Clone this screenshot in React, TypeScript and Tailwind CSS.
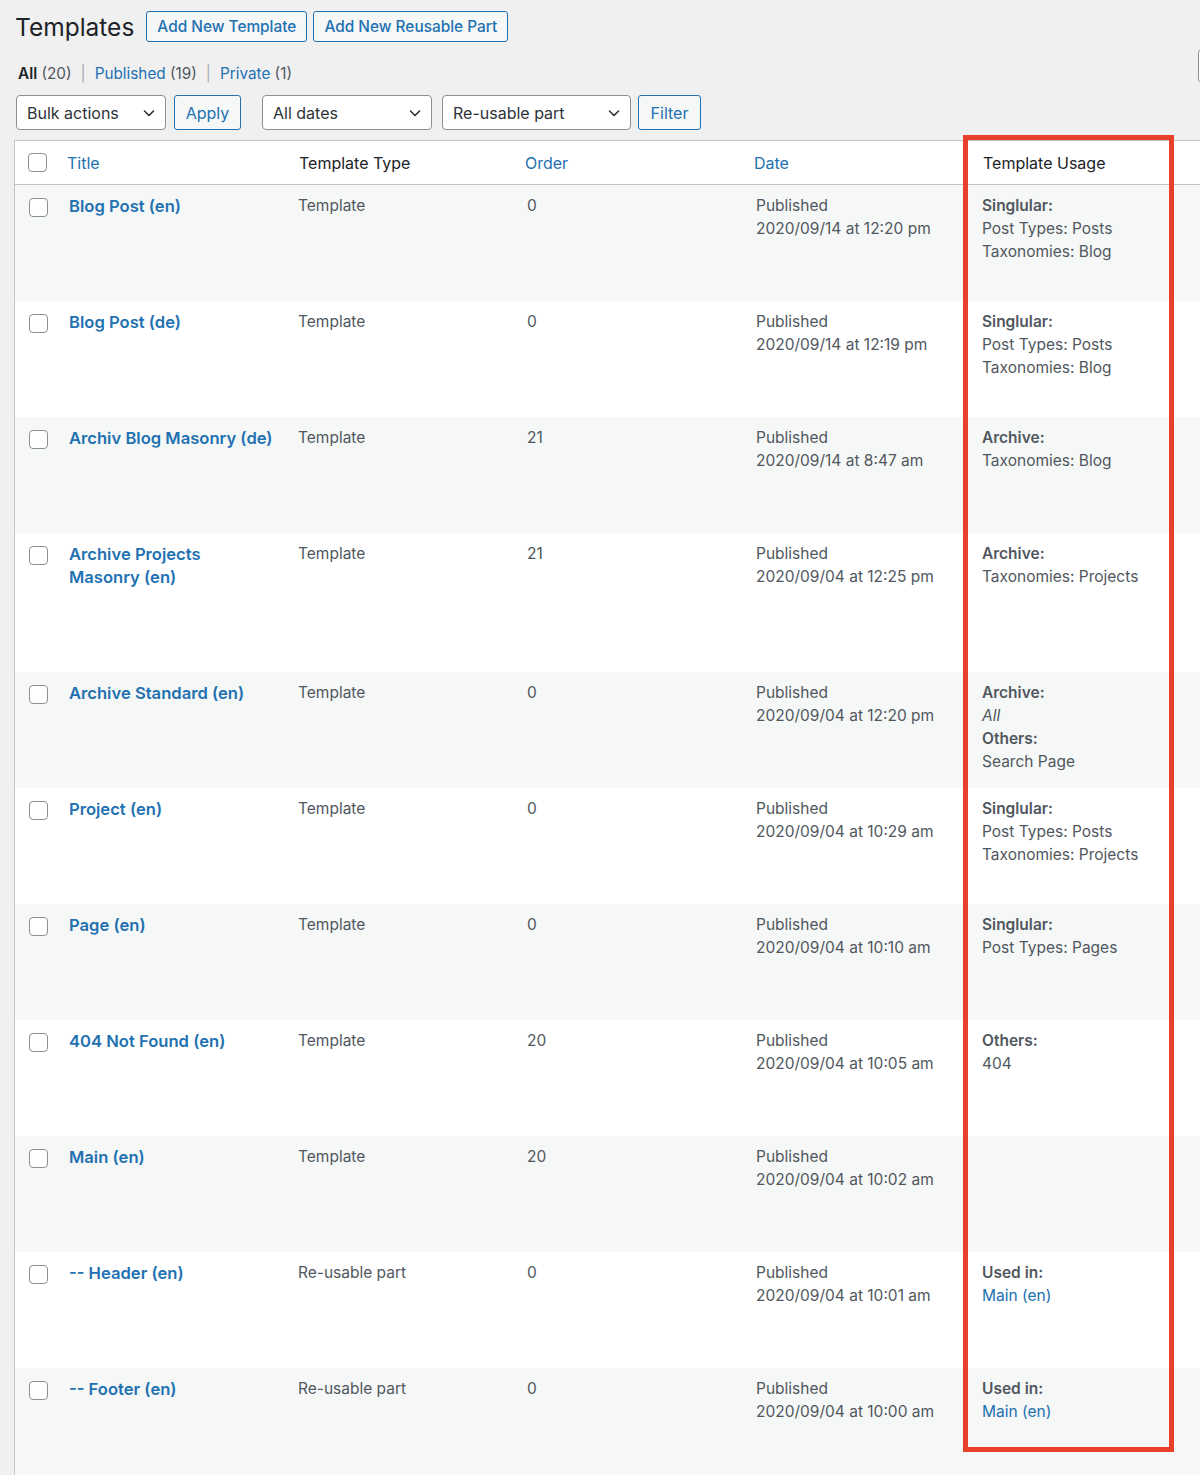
const rows: {
  title: string;
  type: string;
  order: string;
  date: string;
  usage: { text: string; kind: 'label' | 'text' | 'italic' | 'link' }[];
}[] = [
  { title: 'Blog Post (en)', type: 'Template', order: '0', date: '2020/09/14 at 12:20 pm', usage: [{ text: 'Singlular:', kind: 'label' }, { text: 'Post Types: Posts', kind: 'text' }, { text: 'Taxonomies: Blog', kind: 'text' }] },
  { title: 'Blog Post (de)', type: 'Template', order: '0', date: '2020/09/14 at 12:19 pm', usage: [{ text: 'Singlular:', kind: 'label' }, { text: 'Post Types: Posts', kind: 'text' }, { text: 'Taxonomies: Blog', kind: 'text' }] },
  { title: 'Archiv Blog Masonry (de)', type: 'Template', order: '21', date: '2020/09/14 at 8:47 am', usage: [{ text: 'Archive:', kind: 'label' }, { text: 'Taxonomies: Blog', kind: 'text' }] },
  { title: 'Archive Projects\nMasonry (en)', type: 'Template', order: '21', date: '2020/09/04 at 12:25 pm', usage: [{ text: 'Archive:', kind: 'label' }, { text: 'Taxonomies: Projects', kind: 'text' }] },
  { title: 'Archive Standard (en)', type: 'Template', order: '0', date: '2020/09/04 at 12:20 pm', usage: [{ text: 'Archive:', kind: 'label' }, { text: 'All', kind: 'italic' }, { text: 'Others:', kind: 'label' }, { text: 'Search Page', kind: 'text' }] },
  { title: 'Project (en)', type: 'Template', order: '0', date: '2020/09/04 at 10:29 am', usage: [{ text: 'Singlular:', kind: 'label' }, { text: 'Post Types: Posts', kind: 'text' }, { text: 'Taxonomies: Projects', kind: 'text' }] },
  { title: 'Page (en)', type: 'Template', order: '0', date: '2020/09/04 at 10:10 am', usage: [{ text: 'Singlular:', kind: 'label' }, { text: 'Post Types: Pages', kind: 'text' }] },
  { title: '404 Not Found (en)', type: 'Template', order: '20', date: '2020/09/04 at 10:05 am', usage: [{ text: 'Others:', kind: 'label' }, { text: '404', kind: 'text' }] },
  { title: 'Main (en)', type: 'Template', order: '20', date: '2020/09/04 at 10:02 am', usage: [] },
  { title: '-- Header (en)', type: 'Re-usable part', order: '0', date: '2020/09/04 at 10:01 am', usage: [{ text: 'Used in:', kind: 'label' }, { text: 'Main (en)', kind: 'link' }] },
  { title: '-- Footer (en)', type: 'Re-usable part', order: '0', date: '2020/09/04 at 10:00 am', usage: [{ text: 'Used in:', kind: 'label' }, { text: 'Main (en)', kind: 'link' }] },
];

const Chevron = () => (
  <svg width="14" height="14" viewBox="0 0 14 14" fill="none" stroke="#2c3338" strokeWidth="1.6" strokeLinecap="round" strokeLinejoin="round">
    <path d="M2.5 5l4.5 4.5L11.5 5" />
  </svg>
);

const Checkbox = () => (
  <span className="block h-[19px] w-[19px] rounded-[4px] border border-[#8c8f94] bg-white" />
);

function Select({ label, width }: { label: string; width: string }) {
  return (
    <div className={`flex h-[35px] items-center justify-between rounded-[4px] border border-[#8c8f94] bg-white pl-[10px] pr-[9px] text-[16px] text-[#2c3338] ${width}`}>
      <span>{label}</span>
      <Chevron />
    </div>
  );
}

function OutlineButton({ label, className = '' }: { label: string; className?: string }) {
  return (
    <button className={`rounded-[3px] border border-[#2271b1] bg-[#f6f7f7] text-[#2271b1] ${className}`}>{label}</button>
  );
}

export default function App() {
  return (
    <div className="w-full overflow-hidden bg-[#f0f0f1] font-['Inter','Liberation_Sans',sans-serif]">
      <div className="relative w-[1216px] pl-[14px] pb-[40px]">
        {/* page heading */}
        <div className="flex items-center pt-[11px]">
          <h1 className="ml-[1px] mr-[12px] text-[24.5px] leading-[30px] font-normal text-[#1d2327]">Templates</h1>
          <OutlineButton label="Add New Template" className="h-[31px] px-[10px] text-[15.4px] font-medium" />
          <OutlineButton label="Add New Reusable Part" className="ml-[6px] h-[31px] px-[10px] text-[15.4px] font-medium" />
        </div>

        {/* status links + search */}
        <div className="mt-[7px] flex h-[36px] items-end justify-between">
          <div className="ml-[4px] flex items-center gap-[9px] text-[15.3px] leading-[22px] text-[#50575e]">
            <span><b className="font-semibold text-[#1d2327]">All</b> (20)</span>
            <span className="text-[#a7aaad]">|</span>
            <span><span className="text-[#2271b1]">Published</span> (19)</span>
            <span className="text-[#a7aaad]">|</span>
            <span><span className="text-[#2271b1]">Private</span> (1)</span>
          </div>
          <div className="-mr-[182px] h-[34px] w-[200px] self-start rounded-[4px] border border-[#8c8f94] bg-white" />
        </div>

        {/* filters */}
        <div className="mt-[10px] flex items-center">
          <Select label="Bulk actions" width="ml-[2px] w-[150px]" />
          <OutlineButton label="Apply" className="ml-[8px] h-[35px] w-[67px] text-[16px]" />
          <Select label="All dates" width="ml-[21px] w-[170px]" />
          <Select label="Re-usable part" width="ml-[10px] w-[189px]" />
          <OutlineButton label="Filter" className="ml-[7px] h-[35px] w-[63px] text-[16px]" />
        </div>

        {/* table */}
        <div className="mt-[10px] border border-[#c3c4c7] bg-white">
          <div className="grid h-[44px] grid-cols-[44px_230px_228px_229px_227px_1fr] items-center border-b border-[#c3c4c7] text-[16px] text-[#1d2327]">
            <div className="flex justify-center pl-[1px]"><Checkbox /></div>
            <div className="pl-[8px] text-[#2271b1]">Title</div>
            <div className="pl-[10px]">Template Type</div>
            <div className="pl-[8px] text-[#2271b1]">Order</div>
            <div className="pl-[8px] text-[#2271b1]">Date</div>
            <div className="pl-[10px]">Template Usage</div>
          </div>
          {rows.map((r, i) => (
            <div
              key={r.title}
              className={`grid grid-cols-[44px_230px_228px_229px_227px_1fr] text-[15.5px] leading-[23px] text-[#50575e] ${i % 2 === 0 ? 'bg-[#f6f7f7]' : 'bg-white'}`}
            >
              <div className="flex justify-center pt-[13px] pl-[2px]"><Checkbox /></div>
              <div className="px-[10px] pt-[10px] pb-[10px]">
                <div className="whitespace-pre-line text-[16.6px] font-semibold text-[#2271b1]">{r.title}</div>
                <div className="h-[73px]" />
              </div>
              <div className="pl-[9px] pr-[10px] pt-[9px]">{r.type}</div>
              <div className="px-[10px] pt-[9px]">{r.order}</div>
              <div className="px-[10px] pt-[9px]">
                <div>Published</div>
                <div>{r.date}</div>
              </div>
              <div className="pl-[9px] pr-[10px] pt-[9px]">
                {r.usage.map((u, j) => (
                  <div
                    key={j}
                    className={
                      u.kind === 'label'
                        ? 'font-semibold'
                        : u.kind === 'italic'
                          ? 'italic'
                          : u.kind === 'link'
                            ? 'text-[#2271b1]'
                            : ''
                    }
                  >
                    {u.text}
                  </div>
                ))}
              </div>
            </div>
          ))}
        </div>

        {/* highlight annotation */}
        <div className="pointer-events-none absolute left-[963px] top-[135px] h-[1317px] w-[211px] border-[5px] border-[#e8402b]" />
      </div>
    </div>
  );
}
